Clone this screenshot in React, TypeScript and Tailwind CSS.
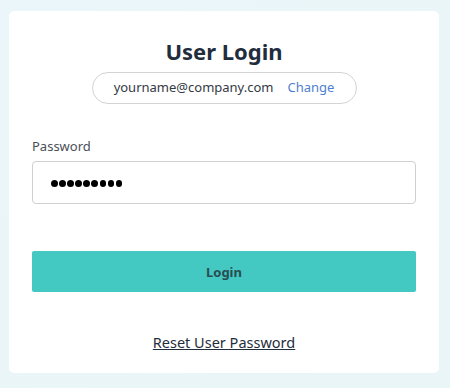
import React from "react";

export default function App() {
  return (
    <div
      className="w-[450px] h-[388px] bg-gradient-to-br from-[#eaf6f9] to-[#eaf5f7] pt-[11px] pl-[9px] pr-[11px] pb-[15px]"
      style={{ fontFamily: '"Noto Sans", "Open Sans", sans-serif' }}
    >
      <div className="w-[430px] h-[362px] bg-white rounded-[5px] px-[23px] pt-[25px] flex flex-col items-stretch">
        <h1 className="text-center text-[22px] leading-[30px] font-bold text-[#1f2d3d]">User Login</h1>
        <div className="self-center mt-[6px] w-[265px] h-[32px] rounded-full border border-[#d4d4d4] flex items-center justify-center gap-[14px]">
          <span className="text-[13px] text-[#333a44]">yourname@company.com</span>
          <span className="text-[13px] text-[#4f7fd0]">Change</span>
        </div>
        <label className="mt-[33px] text-[13px] leading-[18px] text-[#4a4f57]">Password</label>
        <div className="mt-[6px] h-[43px] border border-[#d0d0d0] rounded-[4px] flex items-center pl-[18px] pt-[2px] gap-[1.6px]">
          {Array.from({ length: 9 }).map((_, i) => (
            <span key={i} className="w-[6.5px] h-[6.5px] rounded-full bg-black" />
          ))}
        </div>
        <button className="mt-[47px] h-[41px] pt-[2px] rounded-[2px] bg-[#43c8c2] text-[13px] font-bold text-[#2a4d52]">
          Login
        </button>
        <a className="mt-[39px] self-center text-[14.5px] leading-[22px] text-[#1f2d3d] underline">
          Reset User Password
        </a>
      </div>
    </div>
  );
}
